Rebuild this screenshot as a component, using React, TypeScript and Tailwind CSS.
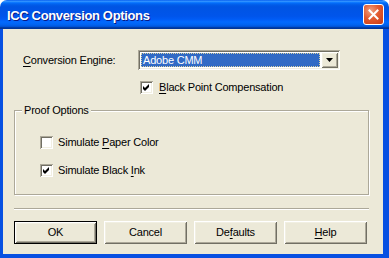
import type { ReactNode } from "react";

const raised =
  "shadow-[inset_1px_1px_#ffffff,inset_-1px_-1px_#716f64,inset_2px_2px_#f1efe2,inset_-2px_-2px_#aca899]";
const sunken =
  "shadow-[inset_1px_1px_#aca899,inset_-1px_-1px_#ffffff,inset_2px_2px_#716f64,inset_-2px_-2px_#f1efe2]";

function U({ children }: { children: ReactNode }) {
  return <span className="underline underline-offset-[2px]">{children}</span>;
}

function CheckBox({ checked }: { checked?: boolean }) {
  return (
    <div className={`h-[13px] w-[13px] shrink-0 bg-white ${sunken}`}>
      {checked ? (
        <svg width="13" height="13" viewBox="0 0 13 13">
          <polygon points="3,5 5,7 9,3 9,6 5,10 3,8" fill="#000" />
        </svg>
      ) : null}
    </div>
  );
}

function Button({ children, isDefault }: { children: ReactNode; isDefault?: boolean }) {
  return (
    <div
      className={`flex h-[23px] w-[83px] items-center justify-center ${
        isDefault ? "border border-black" : ""
      } bg-[#ece9d8]`}
    >
      <div className={`flex h-full w-full items-center justify-center ${raised}`}>{children}</div>
    </div>
  );
}

export default function App() {
  return (
    <div className="flex h-[258px] w-[389px] flex-col font-['Liberation_Sans',Arial,sans-serif] text-[11px] leading-[13px] tracking-[-0.2px] text-black">
      <div className="flex h-[29px] shrink-0 items-center rounded-t-[7px] bg-[linear-gradient(180deg,#0058ee_0%,#3593ff_4%,#288eff_6%,#127dff_8%,#036ffc_10%,#0262ee_14%,#0057e5_20%,#0054e3_24%,#0055eb_56%,#005bf5_66%,#026afe_76%,#0062ef_86%,#0052d6_92%,#0040ab_94%,#003092_100%)] pl-[7px] pr-[5px]">
        <span className="mt-[1px] text-[13px] font-bold tracking-[-0.35px] text-white [text-shadow:1px_1px_0_#0a1883]">
          ICC Conversion Options
        </span>
        <div className="ml-auto flex h-[21px] w-[21px] items-center justify-center rounded-[3px] border border-white bg-[radial-gradient(circle_at_35%_30%,#f0a080_0%,#e25a30_45%,#c83a14_100%)]">
          <svg width="11" height="11" viewBox="0 0 11 11">
            <path d="M1.5 1.5 L9.5 9.5 M9.5 1.5 L1.5 9.5" stroke="#fff" strokeWidth="2" strokeLinecap="square" />
          </svg>
        </div>
      </div>

      <div className="flex min-h-0 flex-1 border-b-[4px] border-l-[3px] border-r-[6px] border-[#0750e2]">
        <div className="flex flex-1 flex-col bg-[#ece9d8] pl-[11px]">
          <div className="mt-[21px] flex items-center">
            <div className="w-[124px] pl-[9px]">
              <U>C</U>onversion Engine:
            </div>
            <div className={`flex h-[20px] w-[202px] items-stretch bg-white p-[2px] ${sunken}`}>
              <div className="m-[1px] flex flex-1 items-center border border-dotted border-[#d8d0a0] bg-[#316ac5] pl-[1px] text-white">
                Adobe CMM
              </div>
              <div className={`flex w-[17px] items-center justify-center bg-[#ece9d8] ${raised}`}>
                <svg width="7" height="4" viewBox="0 0 7 4">
                  <polygon points="0,0 7,0 3.5,4" fill="#000" />
                </svg>
              </div>
            </div>
          </div>

          <div className="mt-[11px] flex items-center gap-[6px] pl-[126px]">
            <CheckBox checked />
            <span>
              <U>B</U>lack Point Compensation
            </span>
          </div>

          <div className="relative mt-[16px] h-[85px] w-[355px] border border-[#aca899] shadow-[inset_1px_1px_#ffffff,1px_1px_#ffffff]">
            <span className="absolute -top-[7px] left-[7px] bg-[#ece9d8] px-[2px]">Proof Options</span>
            <div className="flex flex-col gap-[15px] pl-[25px] pt-[25px]">
              <div className="flex items-center gap-[5px]">
                <CheckBox />
                <span>
                  Simulate <U>P</U>aper Color
                </span>
              </div>
              <div className="flex items-center gap-[5px]">
                <CheckBox checked />
                <span>
                  Simulate Black <U>I</U>nk
                </span>
              </div>
            </div>
          </div>

          <div className="mt-[13px] h-[2px] w-[355px] border-b border-t border-b-white border-t-[#aca899]" />

          <div className="mt-[11px] flex gap-[7px]">
            <Button isDefault>OK</Button>
            <Button>Cancel</Button>
            <Button>
              <span>
                De<U>f</U>aults
              </span>
            </Button>
            <Button>
              <span>
                <U>H</U>elp
              </span>
            </Button>
          </div>
        </div>
      </div>
    </div>
  );
}
